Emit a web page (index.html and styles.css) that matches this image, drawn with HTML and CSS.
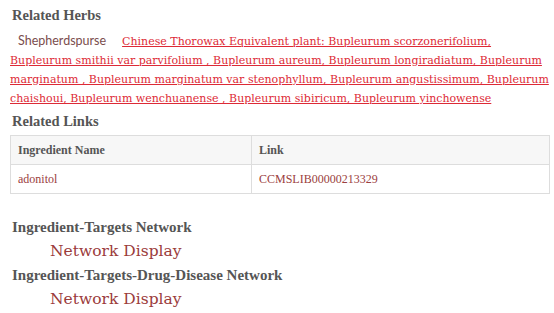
FILE: index.html
```html
<!DOCTYPE html>
<html>
<head>
<meta charset="utf-8">
<link rel="stylesheet" href="styles.css">
</head>
<body>
<div class="page">
  <h3 class="sec">Related Herbs</h3>
  <p class="herbs"><span class="herb">Shepherdspurse</span><a class="rlink" href="#">Chinese Thorowax Equivalent plant: Bupleurum scorzonerifolium, Bupleurum smithii var parvifolium , Bupleurum aureum, Bupleurum longiradiatum, Bupleurum marginatum , Bupleurum marginatum var stenophyllum, Bupleurum angustissimum, Bupleurum chaishoui, Bupleurum wenchuanense , Bupleurum sibiricum, Bupleurum yinchowense</a></p>
  <h3 class="sec sec2">Related Links</h3>
  <table class="tbl">
    <thead><tr><th>Ingredient Name</th><th>Link</th></tr></thead>
    <tbody><tr><td><a href="#">adonitol</a></td><td><a href="#">CCMSLIB00000213329</a></td></tr></tbody>
  </table>
  <h4 class="net">Ingredient-Targets Network</h4>
  <a class="disp" href="#">Network Display</a>
  <h4 class="net net2">Ingredient-Targets-Drug-Disease Network</h4>
  <a class="disp" href="#">Network Display</a>
</div>
</body>
</html>
```
FILE: styles.css
```css
html, body { margin: 0; padding: 0; background: #fff; }
body { font-family: "Liberation Serif", serif; color: #555; }
.page { padding: 0 4px 0 10px; }
.sec { margin: 0; padding: 6px 0 0 2px; font-size: 14.5px; font-weight: bold; color: #555; line-height: 18px; }
.sec2 { padding-top: 4px; }
.herbs { margin: 7px 0 0 0; font-family: "DejaVu Serif", serif; font-size: 11px; line-height: 19px; }
.herb { font-family: "Lato", sans-serif; color: #7a4d4d; font-size: 12.5px; margin: 0 16px 0 8px; }
.rlink { color: #dd2a36; text-decoration: underline; }
.tbl { margin-top: 5px; width: 540px; border-collapse: collapse; font-size: 12px; }
.tbl th, .tbl td { border: 1px solid #ddd; text-align: left; padding: 0 7px; height: 28px; }
.tbl th { background: #f7f7f7; color: #555; font-weight: bold; }
.tbl td a { color: #9b4040; text-decoration: none; }
.tbl th:first-child { width: 226px; }
.net { margin: 24px 0 0 2px; font-size: 15px; font-weight: bold; color: #555; line-height: 18px; }
.net2 { margin-top: 4px; }
.disp { display: block; margin: 4px 0 0 40px; font-family: "DejaVu Serif", serif; font-size: 15.5px; color: #9b3b3b; text-decoration: none; line-height: 22px; }
```
